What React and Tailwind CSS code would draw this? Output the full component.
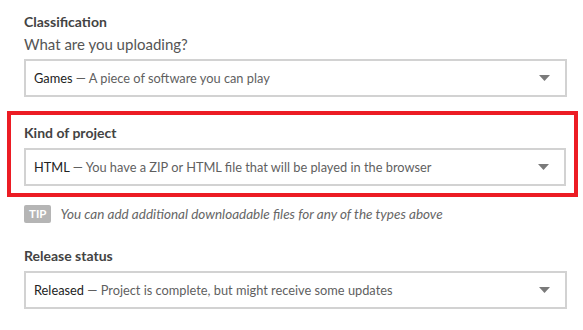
import React from "react";

function Arrow() {
  return (
    <svg width="11" height="6" viewBox="0 0 11 6" className="shrink-0">
      <path d="M0 0 H11 L5.5 6 Z" fill="#7a7a7a" />
    </svg>
  );
}

function Select({ strong, rest }) {
  return (
    <div className="mt-[5px] h-[38px] border-2 border-[#d2d2d2] bg-white flex items-center justify-between pl-[8px] pr-[15px]">
      <span className="text-[12.8px] leading-[20px] whitespace-nowrap">
        <span className="text-[#222222]">{strong}</span>
        <span className="text-[#5f5f5f]"> — {rest}</span>
      </span>
      <Arrow />
    </div>
  );
}

function Label({ children }) {
  return <div className="text-[14px] leading-[20px] font-bold text-[#434343]">{children}</div>;
}

export default function App() {
  return (
    <div
      className="w-[583px] h-[330px] bg-white overflow-hidden pt-[12px]"
      style={{ fontFamily: "Lato, 'Liberation Sans', sans-serif" }}
    >
      <div className="ml-[24px] w-[543px]">
        <Label>Classification</Label>
        <div className="mt-[2px] text-[15px] leading-[20px] text-[#555555]">What are you uploading?</div>
        <Select strong="Games" rest="A piece of software you can play" />
      </div>

      <div className="mt-[14px] ml-[7px] w-[571px] border-4 border-[#ec1c24] pl-[13px] pr-[8px] pt-[8px] pb-[7px]">
        <Label>Kind of project</Label>
        <Select strong="HTML" rest="You have a ZIP or HTML file that will be played in the browser" />
      </div>

      <div className="ml-[24px] w-[543px]">
        <div className="mt-[7px] flex items-center gap-[9px]">
          <span className="h-[18px] px-[5px] bg-[#b5b5b5] text-white text-[11.5px] font-bold leading-[18px] rounded-[2px]">TIP</span>
          <span className="italic text-[13.5px] leading-[20px] text-[#666666]">
            You can add additional downloadable files for any of the types above
          </span>
        </div>

        <div className="mt-[22px]">
          <Label>Release status</Label>
          <Select strong="Released" rest="Project is complete, but might receive some updates" />
        </div>
      </div>
    </div>
  );
}
